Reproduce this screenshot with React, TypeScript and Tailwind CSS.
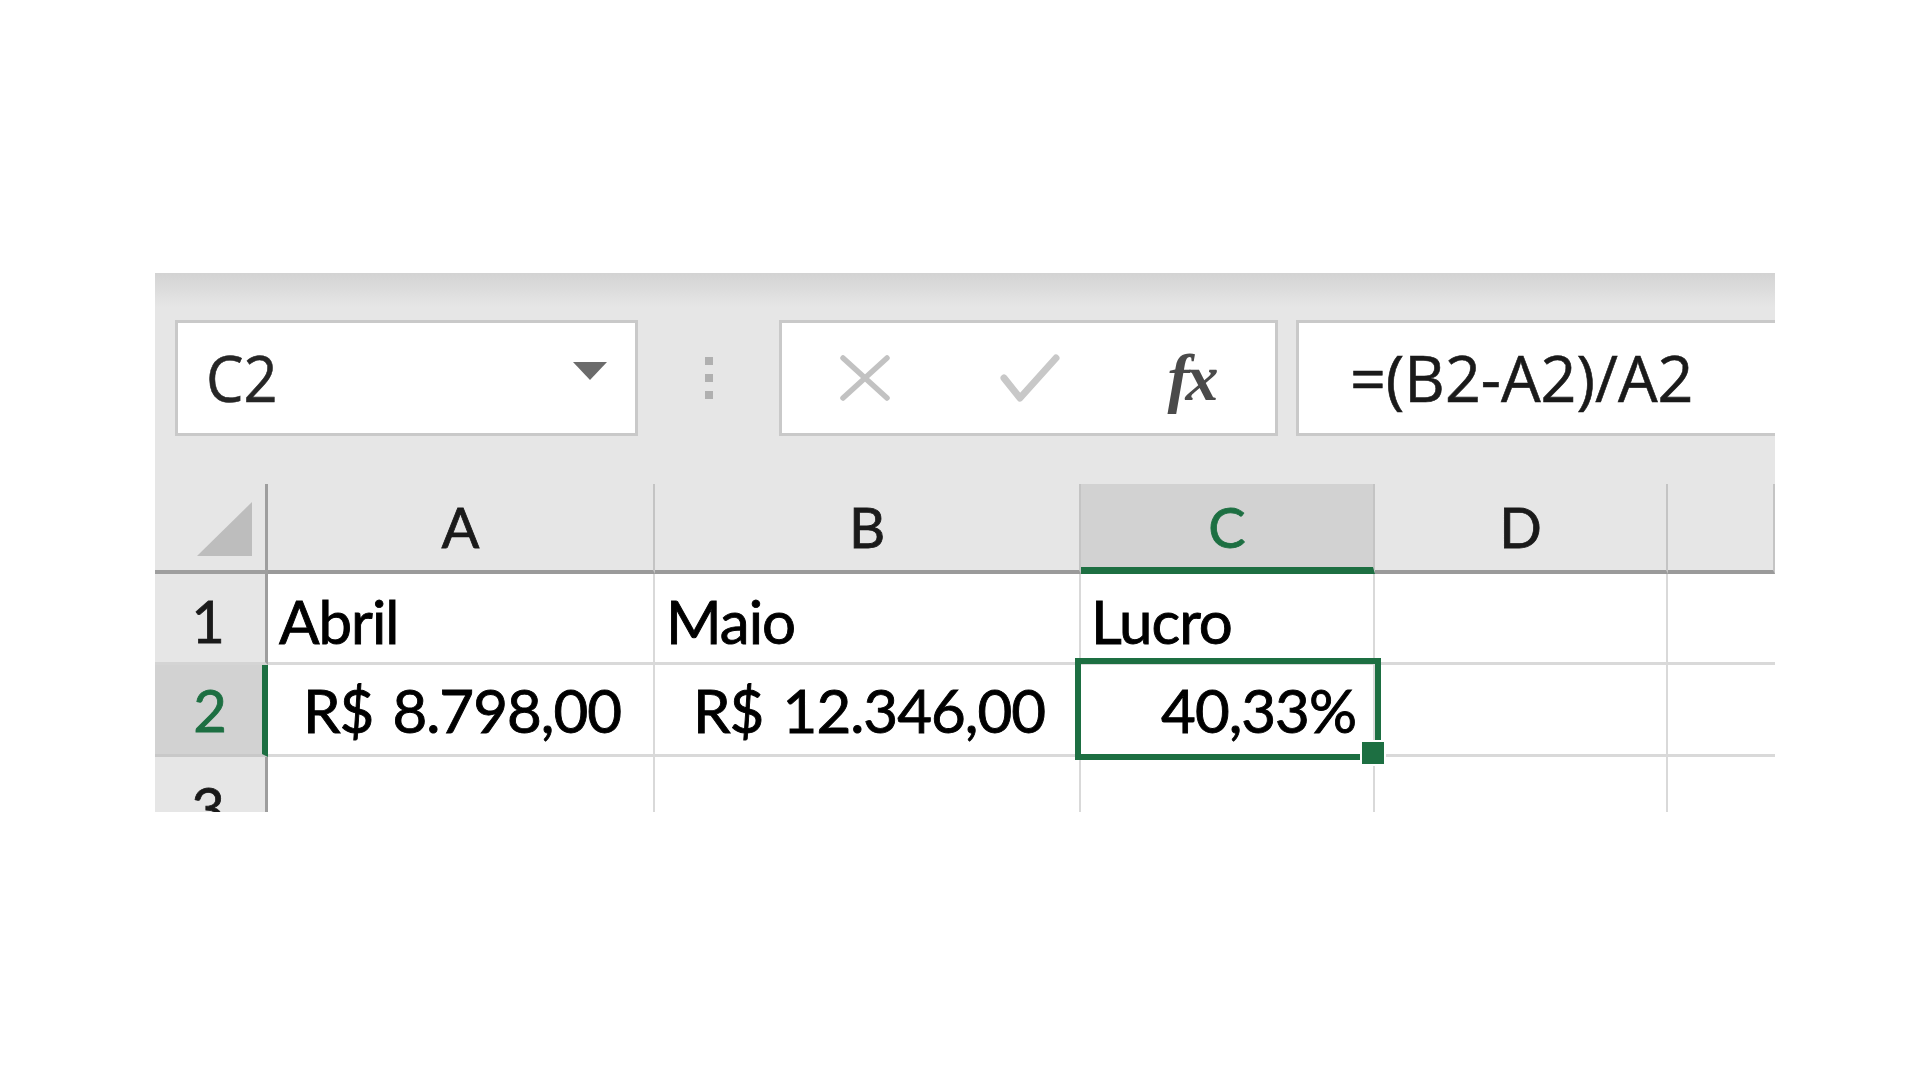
import React from "react";

function XIcon() {
  return (
    <svg width="52" height="46" viewBox="0 0 52 46">
      <path d="M4 3 L48 43 M48 3 L4 43" stroke="#c2c2c2" strokeWidth="5.5" strokeLinecap="round" fill="none" />
    </svg>
  );
}

function CheckIcon() {
  return (
    <svg width="60" height="48" viewBox="0 0 60 48">
      <path d="M4 24 L20 44 L56 4" stroke="#c8c8c8" strokeWidth="7" strokeLinecap="round" strokeLinejoin="round" fill="none" />
    </svg>
  );
}

const cellText = "text-[60px] leading-none tracking-[-1px] [-webkit-text-stroke:0.9px_#000]";

export default function App() {
  return (
    <div className="min-h-screen w-full bg-white pt-[273px] pl-[155px]" style={{ fontFamily: "Lato, 'Open Sans', sans-serif" }}>
      <div className="w-[1620px] h-[539px] overflow-hidden bg-[#e6e6e6] flex flex-col">
        {/* Toolbar */}
        <div className="h-[211px] shrink-0 bg-[linear-gradient(to_bottom,#d3d3d3_0px,#e6e6e6_34px,#e6e6e6_100%)] pt-[47px] flex items-start">
          <div className="ml-[20px] w-[463px] h-[116px] bg-white border-[3px] border-[#c9c9c9] flex items-center justify-between pl-[28px] pr-[28px]">
            <span className="text-[64px] leading-none text-[#262626] scale-x-[0.93] origin-left [-webkit-text-stroke:0.6px_#262626]" style={{ fontFamily: "'Open Sans', sans-serif" }}>C2</span>
            <svg width="34" height="18" viewBox="0 0 34 18" className="-mt-[14px]">
              <path d="M0 0 L34 0 L17 18 Z" fill="#6b6b6b" />
            </svg>
          </div>
          <div className="w-[141px] h-[116px] flex flex-col items-center justify-center gap-[9px]">
            <span className="block w-[8px] h-[8px] bg-[#b0b0b0]" />
            <span className="block w-[8px] h-[8px] bg-[#b0b0b0]" />
            <span className="block w-[8px] h-[8px] bg-[#b0b0b0]" />
          </div>
          <div className="w-[499px] h-[116px] bg-white border-[3px] border-[#c9c9c9] relative flex items-center">
            <div className="w-[166px] flex justify-center"><XIcon /></div>
            <div className="w-[164px] flex justify-center"><CheckIcon /></div>
            <div className="w-[158px] flex justify-center items-center">
              <span className="italic font-bold text-[#4a4a4a] leading-none text-[66px] tracking-[-4px]" style={{ fontFamily: "'Liberation Serif', serif" }}>fx</span>
            </div>
          </div>
          <div className="ml-[18px] flex-1 h-[116px] bg-white border-[3px] border-r-0 border-[#c9c9c9] flex items-center pl-[51px]">
            <span className="text-[64px] leading-none text-[#1a1a1a] scale-x-[0.98] origin-left whitespace-nowrap [-webkit-text-stroke:0.6px_#1a1a1a]" style={{ fontFamily: "'Open Sans', sans-serif" }}>=(B2-A2)/A2</span>
          </div>
        </div>

        {/* Grid */}
        <div className="grid grid-cols-[113px_387px_426px_294px_293px_1fr] grid-rows-[90px_91px_92px_90px] text-black">
          {/* header row */}
          <div className="bg-[#e6e6e6] border-r-[3px] border-b-[4px] border-[#9e9e9e] relative">
            <svg width="60" height="60" viewBox="0 0 60 60" className="absolute left-[40px] top-[16px]">
              <path d="M57 2 L57 56 L2 56 Z" fill="#bdbdbd" />
            </svg>
          </div>
          {["A", "B", "C", "D", ""].map((l) => (
            <div
              key={l || "E"}
              className={
                l === "C"
                  ? "bg-[#d2d2d2] border-r-[2px] border-r-[#c4c4c4] border-b-[7px] border-b-[#1d6f42] flex items-center justify-center pt-[3px]"
                  : "bg-[#e6e6e6] border-r-[2px] border-r-[#c4c4c4] border-b-[4px] border-b-[#9a9a9a] flex items-center justify-center"
              }
            >
              <span className={l === "C" ? "text-[56px] leading-none text-[#1d6f42] [-webkit-text-stroke:0.8px_#1d6f42]" : "text-[56px] leading-none text-[#1a1a1a] [-webkit-text-stroke:0.8px_#1a1a1a]"}>{l}</span>
            </div>
          ))}

          {/* row 1 */}
          <div className="bg-[#e6e6e6] border-r-[3px] border-[#9e9e9e] border-b-[3px] border-b-[#d4d4d4] flex items-center justify-center pt-[6px] pr-[4px]">
            <span className="text-[58px] leading-none text-[#1a1a1a] [-webkit-text-stroke:0.8px_#1a1a1a]">1</span>
          </div>
          <div className="bg-white border-r-[2px] border-b-[3px] border-[#d9d9d9] flex items-center pl-[11px] pt-[6px]">
            <span className={cellText}>Abril</span>
          </div>
          <div className="bg-white border-r-[2px] border-b-[3px] border-[#d9d9d9] flex items-center pl-[11px] pt-[6px]">
            <span className={cellText}>Maio</span>
          </div>
          <div className="bg-white border-r-[2px] border-b-[3px] border-[#d9d9d9] flex items-center pl-[10px] pt-[6px]">
            <span className={cellText}>Lucro</span>
          </div>
          <div className="bg-white border-r-[2px] border-b-[3px] border-[#d9d9d9]" />
          <div className="bg-white border-b-[3px] border-[#d9d9d9]" />

          {/* row 2 */}
          <div className="bg-[#d2d2d2] border-r-[6px] border-r-[#1d6f42] border-b-[3px] border-b-[#c8c8c8] flex items-center justify-center pl-[3px]">
            <span className="text-[58px] leading-none text-[#1d6f42] [-webkit-text-stroke:0.8px_#1d6f42]">2</span>
          </div>
          <div className="bg-white border-r-[2px] border-b-[3px] border-[#d9d9d9] flex items-center justify-between pl-[35px] pr-[32px]">
            <span className={cellText}>R$</span>
            <span className={cellText}>8.798,00</span>
          </div>
          <div className="bg-white border-r-[2px] border-b-[3px] border-[#d9d9d9] flex items-center justify-between pl-[38px] pr-[34px]">
            <span className={cellText}>R$</span>
            <span className={cellText}>12.346,00</span>
          </div>
          <div className="bg-white border-r-[2px] border-b-[3px] border-[#d9d9d9] flex items-center justify-end pr-[17px] relative">
            <span className={cellText}>40,33%</span>
            <div className="absolute -left-[6px] -top-[7px] w-[306px] h-[102px] border-[6px] border-[#1d6f42]" />
            <div className="absolute left-[279px] top-[75px] w-[22px] h-[22px] bg-[#1d6f42] border-[2px] border-white box-content" />
          </div>
          <div className="bg-white border-r-[2px] border-b-[3px] border-[#d9d9d9]" />
          <div className="bg-white border-b-[3px] border-[#d9d9d9]" />

          {/* row 3 */}
          <div className="bg-[#e6e6e6] border-r-[3px] border-[#9e9e9e] flex items-start justify-center pt-[22px] pr-[4px]">
            <span className="text-[58px] leading-none text-[#1a1a1a] [-webkit-text-stroke:0.8px_#1a1a1a]">3</span>
          </div>
          <div className="bg-white border-r-[2px] border-[#d9d9d9]" />
          <div className="bg-white border-r-[2px] border-[#d9d9d9]" />
          <div className="bg-white border-r-[2px] border-[#d9d9d9]" />
          <div className="bg-white border-r-[2px] border-[#d9d9d9]" />
          <div className="bg-white" />
        </div>
      </div>
    </div>
  );
}
